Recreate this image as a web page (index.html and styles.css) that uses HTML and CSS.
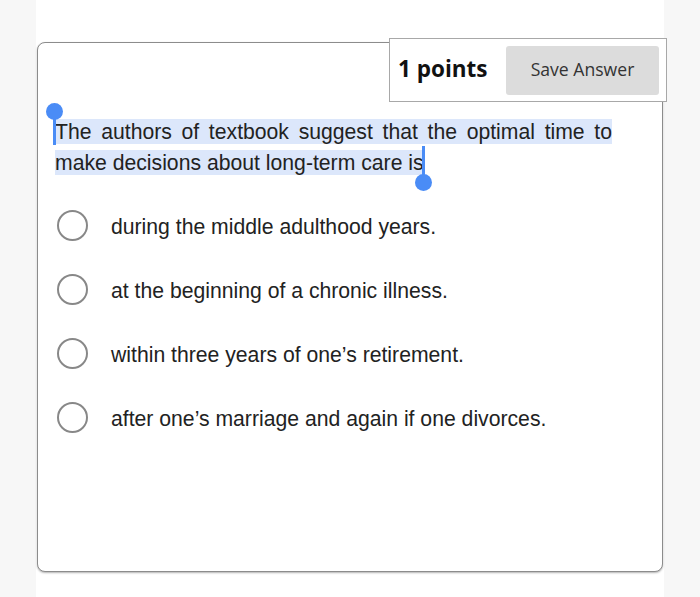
FILE: index.html
```html
<!DOCTYPE html>
<html>
<head>
<meta charset="utf-8">
<link rel="stylesheet" href="styles.css">
</head>
<body>
<div class="column">
  <div class="card">
    <div class="card-head">
      <div class="points-box">
        <span class="points">1 points</span>
        <button class="save">Save Answer</button>
      </div>
    </div>
    <p class="question"><span class="handle handle-start"><span class="knob"></span><span class="stem"></span></span><span class="sel">The authors of textbook suggest that the optimal time to make decisions about long-term care is</span><span class="handle handle-end"><span class="stem"></span><span class="knob"></span></span></p>
    <ul class="options">
      <li class="option"><span class="radio"></span><span class="label">during the middle adulthood years.</span></li>
      <li class="option"><span class="radio"></span><span class="label">at the beginning of a chronic illness.</span></li>
      <li class="option"><span class="radio"></span><span class="label">within three years of one’s retirement.</span></li>
      <li class="option"><span class="radio"></span><span class="label">after one’s marriage and again if one divorces.</span></li>
    </ul>
  </div>
</div>
</body>
</html>
```

FILE: styles.css
```css
html, body {
  margin: 0;
  padding: 0;
  background: #f7f7f7;
}
body {
  height: 597px;
  overflow: hidden;
}
.column {
  width: 628px;
  height: 597px;
  margin: 0 auto;
  background: #ffffff;
  padding-top: 42px;
  box-sizing: border-box;
  padding-left: 1px;
  padding-right: 1px;
}
.card {
  height: 530px;
  box-sizing: border-box;
  border: 1px solid #8c8c8c;
  border-radius: 8px;
  box-shadow: 0 1px 2px rgba(0,0,0,0.3);
  background: #fff;
}
.card-head {
  display: flex;
  justify-content: flex-end;
  margin-top: -5px;
  margin-right: -5px;
}
.points-box {
  display: flex;
  align-items: center;
  justify-content: space-between;
  border: 1px solid #a8a8a8;
  background: #fff;
  padding: 7px 7px 6px 8px;
  height: 64px;
  box-sizing: border-box;
  width: 278px;
}
.points {
  font-family: "Open Sans", sans-serif;
  font-weight: 700;
  font-size: 22.5px;
  color: #111;
  margin-bottom: 5px;
}
.save {
  font-family: "Open Sans", sans-serif;
  font-size: 17.6px;
  color: #333;
  background: #dcdcdc;
  border: none;
  border-radius: 3px;
  width: 153px;
  height: 49px;
  padding: 0 0 3px 0;
}
.question {
  position: relative;
  margin: 14px 50px 0 17px;
  font-family: "Liberation Sans", Arial, sans-serif;
  font-size: 21.2px;
  line-height: 31px;
  color: #222;
  text-align: justify;
}
.sel {
  background: #dce7fb;
  padding: 1px 0;
}
.handle {
  position: relative;
  display: inline-block;
  width: 0;
  height: 0;
}
.handle .knob {
  position: absolute;
  width: 17px;
  height: 17px;
  border-radius: 50%;
  background: #4a8cf6;
}
.handle .stem {
  position: absolute;
  width: 3px;
  background: #4a8cf6;
}
.handle-start .knob { left: -9px; top: -36px; }
.handle-start .stem { left: -2px; top: -27px; height: 33px; }
.handle-end .stem { left: -2px; top: -24px; height: 34px; }
.handle-end .knob { left: -9px; top: 4px; }
.options {
  list-style: none;
  margin: 32px 0 0 0;
  padding: 0 0 0 19px;
  display: flex;
  flex-direction: column;
  gap: 33px;
}
.option {
  display: flex;
  align-items: center;
  gap: 23px;
  height: 31px;
}
.radio {
  width: 31px;
  height: 31px;
  box-sizing: border-box;
  border: 2px solid #888;
  border-radius: 50%;
  flex: none;
}
.label {
  font-family: "Liberation Sans", Arial, sans-serif;
  font-size: 21.2px;
  color: #222;
  padding-top: 3px;
}
```
